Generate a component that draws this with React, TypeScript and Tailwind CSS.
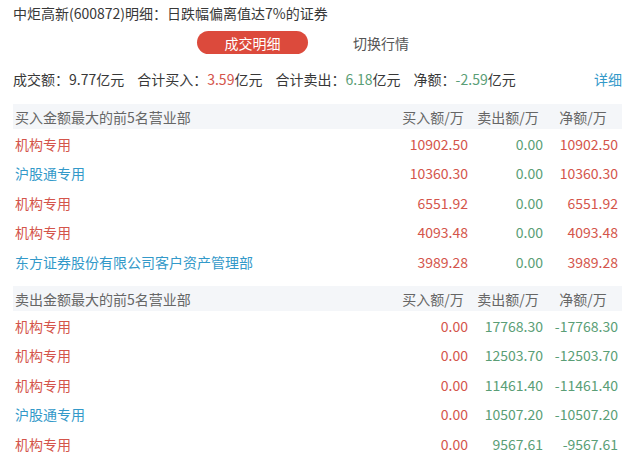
import React from "react";

type Row = { name: string; blue?: boolean; buy: string; sell: string; net: string };

const buyRows: Row[] = [
  { name: "机构专用", buy: "10902.50", sell: "0.00", net: "10902.50" },
  { name: "沪股通专用", blue: true, buy: "10360.30", sell: "0.00", net: "10360.30" },
  { name: "机构专用", buy: "6551.92", sell: "0.00", net: "6551.92" },
  { name: "机构专用", buy: "4093.48", sell: "0.00", net: "4093.48" },
  { name: "东方证券股份有限公司客户资产管理部", blue: true, buy: "3989.28", sell: "0.00", net: "3989.28" },
];

const sellRows: Row[] = [
  { name: "机构专用", buy: "0.00", sell: "17768.30", net: "-17768.30" },
  { name: "机构专用", buy: "0.00", sell: "12503.70", net: "-12503.70" },
  { name: "机构专用", buy: "0.00", sell: "11461.40", net: "-11461.40" },
  { name: "沪股通专用", blue: true, buy: "0.00", sell: "10507.20", net: "-10507.20" },
  { name: "机构专用", buy: "0.00", sell: "9567.61", net: "-9567.61" },
];

function Section({ title, rows, netRed }: { title: string; rows: Row[]; netRed: boolean }) {
  return (
    <div className="ml-[13px] w-[609px]">
      <div className="grid h-[25px] grid-cols-[1fr_75px_75px_75px] items-center bg-[#f4f6f9] pl-[2px] pr-[4px] text-[#666]">
        <span>{title}</span>
        <span className="pl-[5px] text-center">买入额/万</span>
        <span className="pl-[5px] text-center">卖出额/万</span>
        <span className="pl-[5px] text-center">净额/万</span>
      </div>
      {rows.map((r, i) => (
        <div
          key={i}
          className="grid h-[29.5px] grid-cols-[1fr_75px_75px_75px] items-center pl-[2px] pr-[4px]"
        >
          <span className={r.blue ? "text-[#3399c9]" : "text-[#d4554b]"}>{r.name}</span>
          <span className="text-right text-[#d4554b]">{r.buy}</span>
          <span className="text-right text-[#5a9e76]">{r.sell}</span>
          <span className={netRed ? "text-right text-[#d4554b]" : "text-right text-[#5a9e76]"}>{r.net}</span>
        </div>
      ))}
    </div>
  );
}

export default function App() {
  return (
    <div
      className="h-[459px] w-[640px] overflow-hidden bg-white text-[14px] leading-[20px] text-[#383838]"
      style={{ fontFamily: '"Noto Sans CJK SC", "Noto Sans", sans-serif' }}
    >
      <div className="flex h-[26px] items-center pl-[13px]">
        中炬高新(600872)明细：日跌幅偏离值达7%的证券
      </div>
      <div className="mt-[5px] flex items-center pl-[197px]">
        <div className="flex h-[23px] w-[111px] items-center justify-center rounded-[12px] bg-[#dc4a3c] text-white">
          成交明细
        </div>
        <div className="ml-[45px] text-[#555]">切换行情</div>
      </div>
      <div className="flex h-[50px] items-center pl-[13px] pr-[18px]">
        <span className="mr-[13px]">
          成交额：9.77亿元
        </span>
        <span className="mr-[13px]">
          合计买入：<span className="text-[#d4554b]">3.59</span>亿元
        </span>
        <span className="mr-[13px]">
          合计卖出：<span className="text-[#5a9e76]">6.18</span>亿元
        </span>
        <span>
          净额：<span className="text-[#5a9e76]">-2.59</span>亿元
        </span>
        <span className="ml-auto text-[#3399c9]">详细</span>
      </div>
      <div className="mt-[0px]">
        <Section title="买入金额最大的前5名营业部" rows={buyRows} netRed={true} />
      </div>
      <div className="mt-[9.5px]">
        <Section title="卖出金额最大的前5名营业部" rows={sellRows} netRed={false} />
      </div>
    </div>
  );
}
